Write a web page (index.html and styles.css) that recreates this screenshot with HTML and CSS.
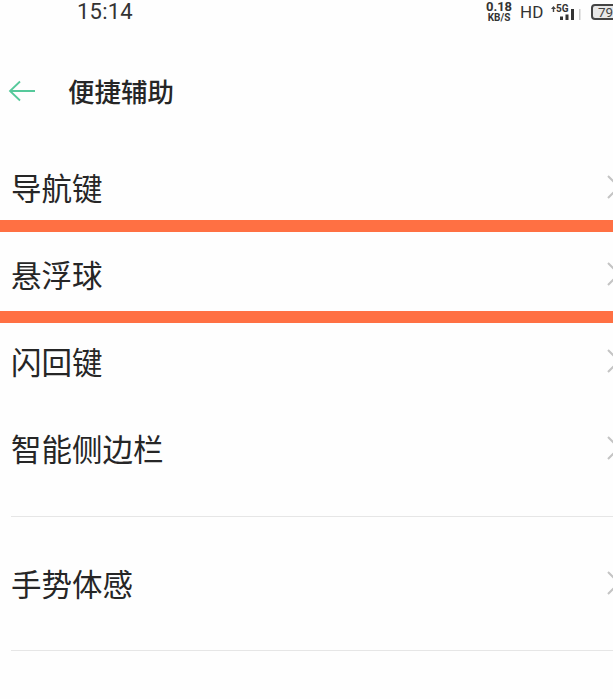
FILE: index.html
```html
<!DOCTYPE html>
<html lang="zh">
<head>
<meta charset="utf-8">
<title>便捷辅助</title>
<link rel="stylesheet" href="styles.css">
</head>
<body>
<div class="page">
  <header class="status">
    <span class="time">15:14</span>
    <div class="status-right">
      <div class="speed"><span>0.18</span><span>KB/S</span></div>
      <span class="hd">HD</span>
      <div class="signal">
        <svg class="uparrow" width="5" height="6" viewBox="0 0 5 6"><path d="M2.500 0 5 3H3.200V6H1.800V3H0Z" fill="#444"/></svg>
        <span class="net">5G</span>
        <svg class="bars" width="21" height="12" viewBox="0 0 21 12"><rect x="0" y="7.500" width="3" height="3.500" fill="#333"/><rect x="5.500" y="5.500" width="3" height="5.500" fill="#333"/><rect x="11" y="0" width="3" height="11" fill="#333"/><rect x="19" y="0" width="1.500" height="11" fill="#ccc"/></svg>
      </div>
      <div class="battery">79</div>
    </div>
  </header>
  <nav class="title-bar">
    <svg class="back" width="28" height="22" viewBox="0 0 28 22"><path d="M27 11H2M12 1.500 2 11l10 9.500" fill="none" stroke="#56c99b" stroke-width="1.800"/></svg>
    <h1 class="title">便捷辅助</h1>
  </nav>
  <section class="group">
    <div class="row"><span>导航键</span><svg class="chev" width="14" height="26" viewBox="0 0 14 26"><path d="M1 2l11 11L1 24" fill="none" stroke="#c4c4c4" stroke-width="2"/></svg></div>
    <div class="row marked"><span>悬浮球</span><svg class="chev" width="14" height="26" viewBox="0 0 14 26"><path d="M1 2l11 11L1 24" fill="none" stroke="#c4c4c4" stroke-width="2"/></svg></div>
    <div class="row"><span>闪回键</span><svg class="chev" width="14" height="26" viewBox="0 0 14 26"><path d="M1 2l11 11L1 24" fill="none" stroke="#c4c4c4" stroke-width="2"/></svg></div>
    <div class="row"><span>智能侧边栏</span><svg class="chev" width="14" height="26" viewBox="0 0 14 26"><path d="M1 2l11 11L1 24" fill="none" stroke="#c4c4c4" stroke-width="2"/></svg></div>
  </section>
  <section class="group last">
    <div class="row"><span>手势体感</span><svg class="chev" width="14" height="26" viewBox="0 0 14 26"><path d="M1 2l11 11L1 24" fill="none" stroke="#c4c4c4" stroke-width="2"/></svg></div>
  </section>
</div>
</body>
</html>
```

FILE: styles.css
```css
html, body {
  margin: 0;
  padding: 0;
  height: 100%;
  overflow: hidden;
  background: #fefefe;
}
.page {
  width: 613px;
  height: 699px;
  overflow: hidden;
  font-family: "Noto Sans CJK SC", "Noto Sans", sans-serif;
  color: #262626;
}
.status {
  height: 24px;
  display: flex;
  align-items: center;
  justify-content: space-between;
  padding-left: 77px;
}
.time {
  font-family: Roboto, sans-serif;
  font-size: 22px;
  letter-spacing: 0.2px;
  line-height: 22px;
  color: #333;
}
.status-right {
  display: flex;
  align-items: center;
  margin-right: -17px;
}
.speed {
  display: flex;
  flex-direction: column;
  align-items: center;
  gap: 1px;
  width: 28px;
  font-family: Roboto, sans-serif;
  font-weight: 700;
  color: #333;
}
.speed span:first-child { font-size: 13px; line-height: 11px; }
.speed span:last-child { font-size: 10px; line-height: 10px; }
.hd {
  margin-left: 7px;
  width: 23px;
  font-family: Roboto, sans-serif;
  font-size: 17px;
  line-height: 20px;
  color: #333;
}
.signal {
  margin-left: 7px;
  width: 30px;
  height: 20px;
  position: relative;
}
.uparrow {
  position: absolute;
  left: 1px;
  top: 4px;
}
.net {
  position: absolute;
  left: 6px;
  top: 2px;
  font-family: Roboto, sans-serif;
  font-size: 10px;
  font-weight: 700;
  line-height: 10px;
  color: #333;
}
.bars { position: absolute; left: 10px; top: 7px; }
.battery {
  margin-left: 11px;
  width: 30px;
  height: 12px;
  border: 2px solid #444;
  border-radius: 4px;
  background: #e8e8e8;
  font-family: Roboto, sans-serif;
  font-size: 13.500px;
  line-height: 12px;
  padding-left: 5px;
  color: #444;
}
.title-bar {
  height: 121px;
  display: flex;
  align-items: flex-start;
}
.back { margin: 56px 0 0 8px; }
.title {
  margin: 48px 0 0 32px;
  font-size: 26.500px;
  font-weight: 500;
  line-height: 38px;
  color: #262626;
}
.group {
  width: 602px;
  margin-left: 11px;
  padding-bottom: 23px;
  border-bottom: 1px solid #e6e6e6;
}
.group.last { padding: 24px 0 22px; }
.row {
  height: 87px;
  box-sizing: border-box;
  padding-bottom: 4px;
  display: flex;
  align-items: center;
  justify-content: space-between;
  font-size: 30.500px;
  line-height: 40px;
  position: relative;
}
.chev { margin-right: -8px; flex: none; }
.marked::before,
.marked::after {
  content: "";
  position: absolute;
  left: -11px;
  width: 613px;
  height: 12px;
  background: #ff7043;
}
.marked::before { top: -12px; }
.marked::after { top: 79px; }
```
